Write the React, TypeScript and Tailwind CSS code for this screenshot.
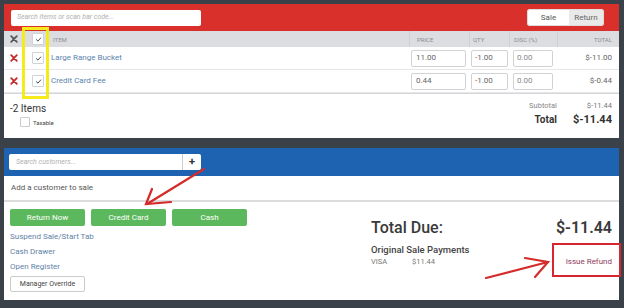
import React from "react";

const Check = () => (
  <svg width="7" height="7" viewBox="0 0 10 10">
    <path d="M2 5.2 L4.2 7.3 L8.2 2.8" fill="none" stroke="#34495e" strokeWidth="1.4" strokeLinecap="round" strokeLinejoin="round" />
  </svg>
);

const XIcon = ({ color }: { color: string }) => (
  <svg width="8" height="8" viewBox="0 0 10 10">
    <path d="M1.5 1.5 L8.5 8.5 M8.5 1.5 L1.5 8.5" stroke={color} strokeWidth="2.2" strokeLinecap="round" />
  </svg>
);

const Box = ({ checked }: { checked: boolean }) => (
  <div className="w-[12px] h-[12px] border border-[#cfd2d6] bg-white rounded-[1px] flex items-center justify-center">
    {checked && <Check />}
  </div>
);

const Row = ({ name, price, total }: { name: string; price: string; total: string }) => (
  <div className="grid grid-cols-[20px_25px_360px_60px_40px_48px_1fr] h-[23px] items-center border-b border-[#e6e7e9]">
    <div className="flex justify-center"><XIcon color="#c62828" /></div>
    <div className="flex justify-center pl-[3px]"><Box checked /></div>
    <div className="pl-[2px] text-[8px] text-[#5a84ac]">{name}</div>
    <div className="pl-[2px]"><div className="w-[55px] h-[17px] border border-[#d0d2d6] rounded-[2px] text-[8px] text-[#666] pl-[4px] flex items-center">{price}</div></div>
    <div className="pl-[2px]"><div className="w-[37px] h-[17px] border border-[#d0d2d6] rounded-[2px] text-[8px] text-[#666] pl-[3px] flex items-center">-1.00</div></div>
    <div className="pl-[4px]"><div className="w-[40px] h-[17px] border border-[#d0d2d6] rounded-[2px] text-[8px] text-[#888] pl-[3px] flex items-center">0.00</div></div>
    <div className="text-right pr-[7px] text-[8px] text-[#666]">{total}</div>
  </div>
);

const GreenBtn = ({ label }: { label: string }) => (
  <div className="w-[75px] h-[17px] bg-[#5cb85c] rounded-[2px] text-white text-[8px] flex items-center justify-center">{label}</div>
);

export default function App() {
  return (
    <div className="relative w-[624px] h-[308px] bg-[#3a4148] overflow-hidden" style={{ fontFamily: "Roboto, 'Liberation Sans', sans-serif" }}>
      <div className="pt-[4px] pl-[4px] pr-[5px] flex flex-col gap-[10px]">
        {/* Top panel */}
        <div className="bg-white h-[134px] flex flex-col">
          <div className="h-[27px] bg-[#d9302c] flex items-center justify-between pl-[7px] pr-[15px]">
            <div className="w-[190px] h-[16px] bg-white rounded-[2px] flex items-center pl-[6px] text-[7px] italic text-[#b0b0b0]">Search items or scan bar code...</div>
            <div className="flex h-[17px] border border-[#ddd] rounded-[2px] overflow-hidden">
              <div className="w-[41px] bg-white text-[8px] text-[#555] flex items-center justify-center">Sale</div>
              <div className="w-[34px] bg-[#e9e9e9] text-[8px] text-[#666] flex items-center justify-center">Return</div>
            </div>
          </div>
          <div className="grid grid-cols-[20px_25px_360px_60px_40px_48px_1fr] h-[16px] items-center bg-[#dcdde0] text-[6px] text-[#8a8d92] uppercase">
            <div className="flex justify-center"><XIcon color="#555" /></div>
            <div className="flex justify-center pl-[3px]"><Box checked /></div>
            <div className="pl-[4px]">Item</div>
            <div className="pl-[7px] h-full flex items-center border-l border-[#cfd0d3]">Price</div>
            <div className="pl-[3px] h-full flex items-center border-l border-[#cfd0d3]">Qty</div>
            <div className="pl-[4px] h-full flex items-center border-l border-[#cfd0d3]">Disc (%)</div>
            <div className="pr-[7px] h-full flex items-center justify-end border-l border-[#cfd0d3]">Total</div>
          </div>
          <Row name="Large Range Bucket" price="11.00" total="$-11.00" />
          <Row name="Credit Card Fee" price="0.44" total="$-0.44" />
          <div className="border-t border-[#d5d6d8] flex justify-between pl-[6px] pr-[7px] pt-[6px]">
            <div className="flex flex-col pt-[2px]">
              <div className="text-[10px] text-[#333] leading-[14px]">-2 Items</div>
              <div className="flex items-center gap-[3px] pl-[10px] mt-[1px]">
                <div className="w-[10px] h-[10px] border border-[#c9ccd1] rounded-[1px]" />
                <span className="text-[6px] text-[#444]">Taxable</span>
              </div>
            </div>
            <div className="grid grid-cols-[auto_auto] gap-x-[16px] items-baseline text-right">
              <div className="text-[7.5px] text-[#888] leading-[12px]">Subtotal</div>
              <div className="text-[7.5px] text-[#777] leading-[12px]">$-11.44</div>
              <div className="text-[10px] font-bold text-[#333] leading-[12px]">Total</div>
              <div className="text-[11px] font-bold text-[#333] leading-[12px]">$-11.44</div>
            </div>
          </div>
        </div>

        {/* Bottom panel */}
        <div className="bg-white h-[152px] flex flex-col">
          <div className="h-[28px] bg-[#1e63b1] flex items-center pl-[5px]">
            <div className="w-[173px] h-[16px] bg-white rounded-l-[2px] flex items-center pl-[7px] text-[7px] italic text-[#b0b0b0]">Search customers...</div>
            <div className="w-[19px] h-[16px] bg-white border-l border-[#ccc] rounded-r-[2px] flex items-center justify-center text-[11px] font-bold text-[#333]">+</div>
          </div>
          <div className="h-[26px] border-b-2 border-[#dcdcdc] flex items-center pl-[7px] text-[8px] text-[#555]">Add a customer to sale</div>
          <div className="flex pt-[7px]">
            <div className="w-[367px] pl-[6px] flex flex-col">
              <div className="flex gap-[6px]">
                <GreenBtn label="Return Now" />
                <GreenBtn label="Credit Card" />
                <GreenBtn label="Cash" />
              </div>
              <div className="text-[8px] text-[#5f83a8] flex flex-col mt-[3px] leading-[15px]">
                <span>Suspend Sale/Start Tab</span>
                <span>Cash Drawer</span>
                <span>Open Register</span>
              </div>
              <div className="mt-[2px] w-[75px] h-[16px] border border-[#ccc] rounded-[2px] text-[7px] text-[#444] flex items-center justify-center">Manager Override</div>
            </div>
            <div className="flex-1 pr-[7px] pt-[7px] flex flex-col">
              <div className="flex justify-between items-center">
                <span className="text-[16px] font-medium text-[#3a3a3a]">Total Due:</span>
                <span className="text-[16px] font-semibold text-[#3a3a3a]">$-11.44</span>
              </div>
              <div className="mt-[3px] text-[9.5px] font-medium text-[#444] leading-[13px]">Original Sale Payments</div>
              <div className="flex items-center text-[7.5px] text-[#777] leading-[12px]">
                <span className="w-[41px]">VISA</span>
                <span>$11.44</span>
                <span className="ml-auto text-[8px] text-[#8d3b5d]">Issue Refund</span>
              </div>
            </div>
          </div>
        </div>
      </div>

      {/* Annotations */}
      <svg className="absolute inset-0 pointer-events-none" width="624" height="308" viewBox="0 0 624 308">
        <rect x="23.5" y="28.5" width="24" height="69" fill="none" stroke="#f4ea1c" strokeWidth="3" />
        <rect x="553" y="244" width="67" height="32" fill="none" stroke="#d8262f" strokeWidth="2" />
        <g stroke="#d52b2b" strokeWidth="2.2" strokeLinecap="round" fill="none">
          <path d="M204 169 L147 204" />
          <path d="M152 189 L146 204 L171 202" />
          <path d="M486 278 L548 262" />
          <path d="M525 258 L548 262 L535 277" />
        </g>
      </svg>
    </div>
  );
}
